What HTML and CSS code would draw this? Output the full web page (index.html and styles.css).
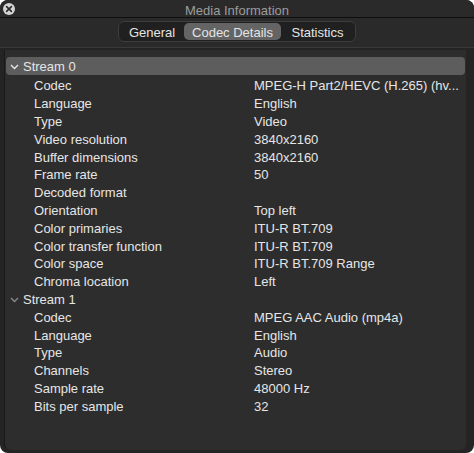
FILE: index.html
```html
<!DOCTYPE html>
<html lang="en">
<head>
  <meta charset="UTF-8">
  <title>Media Information</title>
  <link rel="stylesheet" href="styles.css">
</head>
<body>
  <div class="window">
    <div class="titlebar">
      <span class="close-btn">
        <svg width="12" height="12" viewBox="0 0 12 12">
          <circle cx="6" cy="6" r="6" fill="#d4d4d4"/>
          <path d="M3.6 3.6 L8.4 8.4 M8.4 3.6 L3.6 8.4" stroke="#2b2b2b" stroke-width="1.6" stroke-linecap="round"/>
        </svg>
      </span>
      <span class="title">Media Information</span>
    </div>

    <div class="toolbar">
      <div class="segmented">
        <span class="segment">General</span>
        <span class="segment active">Codec Details</span>
        <span class="segment">Statistics</span>
      </div>
    </div>

    <div class="list">
      <div class="row stream selected">
        <svg class="chevron" width="9" height="6" viewBox="0 0 9 6"><path d="M1 1 L4.5 4.5 L8 1" fill="none" stroke="#e8e8e8" stroke-width="1.4"/></svg>
        <span>Stream 0</span>
      </div>
      <div class="row"><span class="label">Codec</span><span class="value">MPEG-H Part2/HEVC (H.265) (hv...</span></div>
      <div class="row"><span class="label">Language</span><span class="value">English</span></div>
      <div class="row"><span class="label">Type</span><span class="value">Video</span></div>
      <div class="row"><span class="label">Video resolution</span><span class="value">3840x2160</span></div>
      <div class="row"><span class="label">Buffer dimensions</span><span class="value">3840x2160</span></div>
      <div class="row"><span class="label">Frame rate</span><span class="value">50</span></div>
      <div class="row"><span class="label">Decoded format</span><span class="value"></span></div>
      <div class="row"><span class="label">Orientation</span><span class="value">Top left</span></div>
      <div class="row"><span class="label">Color primaries</span><span class="value">ITU-R BT.709</span></div>
      <div class="row"><span class="label">Color transfer function</span><span class="value">ITU-R BT.709</span></div>
      <div class="row"><span class="label">Color space</span><span class="value">ITU-R BT.709 Range</span></div>
      <div class="row"><span class="label">Chroma location</span><span class="value">Left</span></div>
      <div class="row stream">
        <svg class="chevron" width="9" height="6" viewBox="0 0 9 6"><path d="M1 1 L4.5 4.5 L8 1" fill="none" stroke="#8a8a8a" stroke-width="1.4"/></svg>
        <span>Stream 1</span>
      </div>
      <div class="row"><span class="label">Codec</span><span class="value">MPEG AAC Audio (mp4a)</span></div>
      <div class="row"><span class="label">Language</span><span class="value">English</span></div>
      <div class="row"><span class="label">Type</span><span class="value">Audio</span></div>
      <div class="row"><span class="label">Channels</span><span class="value">Stereo</span></div>
      <div class="row"><span class="label">Sample rate</span><span class="value">48000 Hz</span></div>
      <div class="row"><span class="label">Bits per sample</span><span class="value">32</span></div>
    </div>
  </div>
</body>
</html>
```

FILE: styles.css
```css
/* Page */
html, body {
  margin: 0;
  padding: 0;
  background: #ffffff;
}

body {
  font-family: "Liberation Sans", Arial, sans-serif;
  font-size: 13px;
  color: #e6e6e6;
}

/* Window frame */
.window {
  width: 474px;
  height: 453px;
  background: #242424;
  border-radius: 8px;
  overflow: hidden;
  display: flex;
  flex-direction: column;
  box-sizing: border-box;
}

/* Title bar */
.titlebar {
  height: 18px;
  background: #2a2a2a;
  border-bottom: 1px solid #0e0e0e;
  display: flex;
  align-items: center;
  justify-content: center;
  position: relative;
  padding-top: 3px;
  box-sizing: border-box;
}

.close-btn {
  position: absolute;
  left: 3px;
  top: 3px;
  width: 12px;
  height: 12px;
  display: flex;
}

.title {
  color: #9c9c9c;
  font-size: 13px;
}

/* Toolbar with segmented control */
.toolbar {
  height: 30px;
  background: #2a2a2a;
  border-bottom: 1px solid #3a3a3a;
  display: flex;
  justify-content: center;
  align-items: flex-start;
  padding-top: 3px;
  box-sizing: border-box;
}

.segmented {
  display: flex;
  height: 21px;
  padding: 1px;
  box-sizing: border-box;
  background: #202020;
  border: 1px solid #3d3d3d;
  border-radius: 6px;
}

.segment {
  display: flex;
  align-items: center;
  justify-content: center;
  box-sizing: border-box;
  white-space: nowrap;
  color: #e4e4e4;
  font-size: 13px;
  border-radius: 5px;
  padding-top: 1px;
}

.segment:first-child {
  width: 64px;
}

.segment.active {
  background: #646464;
  width: 97px;
}

.segment:last-child {
  width: 73px;
}

/* Detail list */
.list {
  flex: 1;
  margin: 2px 8px 3px 4px;
  padding: 7px 1px 0 1px;
  background: #2d2d2d;
  border-left: 1px solid #1a1a1a;
  border-radius: 0 0 6px 6px;
}

.row {
  height: 17.8px;
  display: flex;
  align-items: center;
}

.row .label {
  width: 220px;
  padding-left: 28px;
  flex-shrink: 0;
}

.row .value {
  flex: 1;
  white-space: nowrap;
}

.row:nth-child(2) {
  margin-top: 2px;
}

.stream {
  padding-left: 4px;
  gap: 4px;
}

.stream .chevron {
  margin-top: 1px;
}

.stream.selected {
  background: #5d5d5d;
  border-radius: 4px;
  height: 18px;
}
```
